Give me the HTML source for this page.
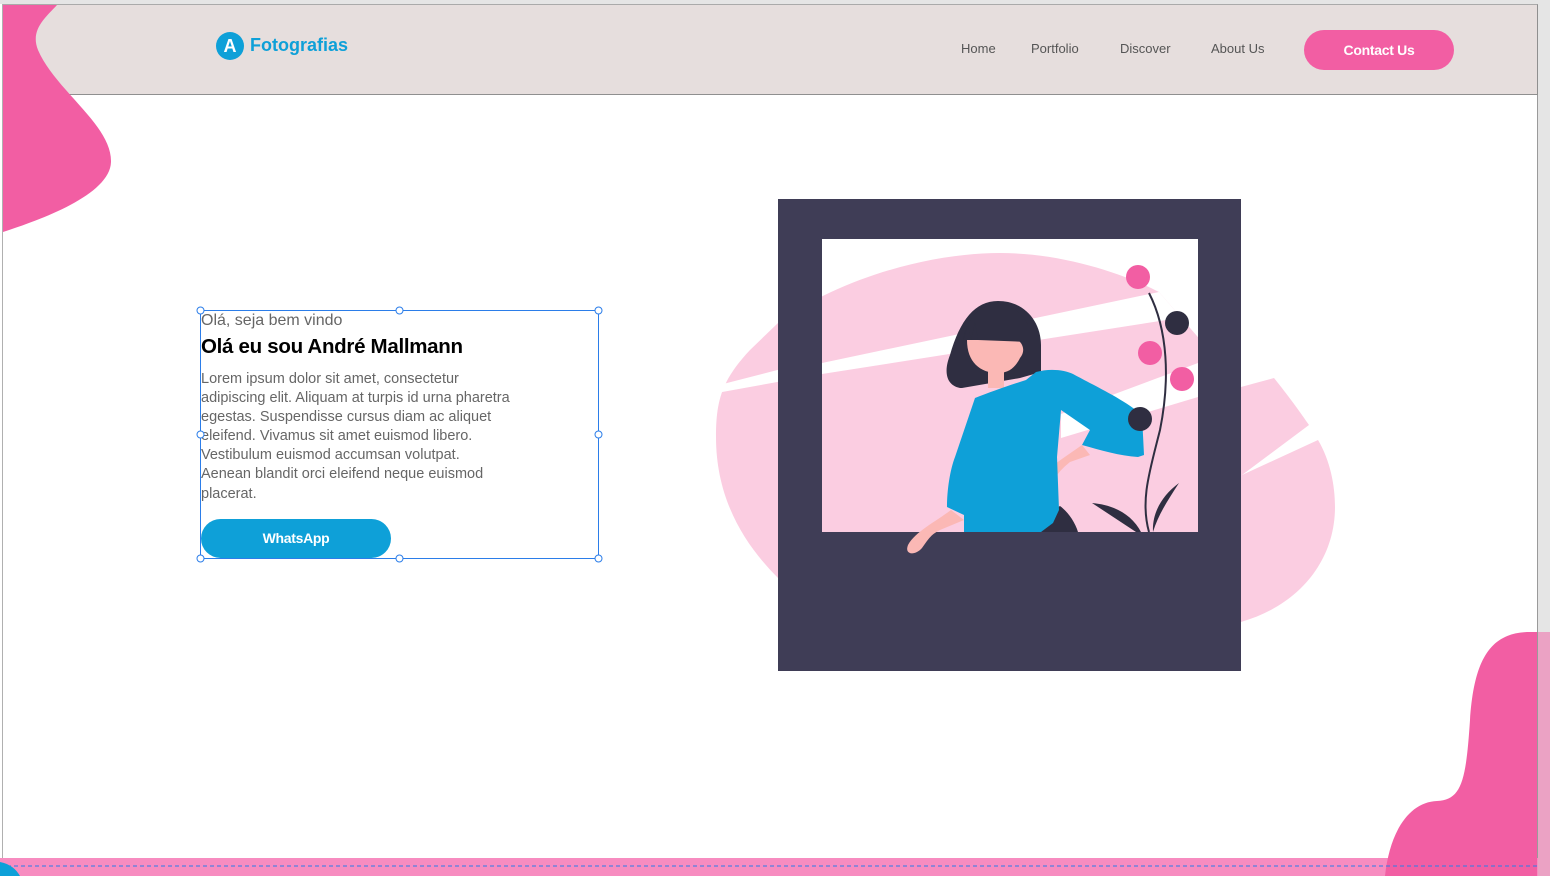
<!DOCTYPE html>
<html><head><meta charset="utf-8"><style>
*{margin:0;padding:0;box-sizing:border-box}
body{width:1550px;height:876px;overflow:hidden;background:#fff;font-family:"Liberation Sans",sans-serif;position:relative}
.abs{position:absolute}
</style></head><body>
<div class="abs" style="left:1537px;top:0;width:13px;height:876px;background:#e5e5e5"></div>
<div class="abs" style="left:0;top:0;width:1550px;height:4px;background:#e5e5e5"></div>
<div class="abs" style="left:3px;top:4px;width:1535px;height:91px;background:#e6dedd;border-top:1px solid #aaa;border-bottom:1px solid #8f8f8f;border-right:1px solid #8f8f8f"></div>
<div class="abs" style="left:1537px;top:95px;width:1px;height:781px;background:#9a9a9a"></div>
<div class="abs" style="left:2px;top:4px;width:1px;height:872px;background:#b0b0b0"></div>

<svg class="abs" style="left:0;top:0" width="1550" height="876" viewBox="0 0 1550 876">
<path d="M3,5 L57,5 C45,18 30,30 38,50 C55,90 112,125 111,162 C110,195 40,220 3,232 Z" fill="#f25ea3"/>
<rect x="0" y="858" width="1550" height="18" fill="#f78cc0"/>
<path d="M1537,876 L1385,876 C1390,830 1410,802 1437,801 C1462,800 1466,780 1470,720 C1474,660 1490,632 1530,632 L1537,632 Z" fill="#f25ea3"/>
<rect x="1538" y="632" width="12" height="244" fill="#eba2c4"/>
<line x1="0" y1="866" x2="1537" y2="866" stroke="#2b7de9" stroke-width="1" stroke-dasharray="4,3"/>
<path d="M0,862 C10,864 16,869 20,876 L0,876 Z" fill="#0ea0d8"/>

<defs><clipPath id="blob"><path id="bp" d="M778,323 C840,278 930,253 1000,253 C1060,253 1120,272 1159,292 L1241,387 L1274,378 C1290,398 1300,412 1309,425 L1242,475 L1318,440 C1330,460 1335,485 1335,507 C1335,560 1300,605 1241,622 L778,578 C745,545 716,500 716,437 C716,400 722,380 750,350 Z"/></clipPath></defs>
<use href="#bp" fill="#fbcde1"/>
<polygon points="700,390 1241,250 1241,298 700,396" fill="#fff"/>
<rect x="778" y="199" width="463" height="472" fill="#3f3d56"/>
<rect x="822" y="239" width="376" height="293" fill="#fff"/>
<g clip-path="url(#blob)">
<rect x="822" y="239" width="376" height="293" fill="#fbcde1"/>
<polygon points="822,363 1159,292 1198,292 1198,315 822,374" fill="#fff"/>
<polygon points="1061,414 1198,363 1198,397 1061,438" fill="#fff"/>
</g>
<path d="M1149,293 C1168,330 1170,380 1160,430 C1150,470 1140,500 1149,532" fill="none" stroke="#2f2e41" stroke-width="2"/>
<path d="M1092,503 C1115,505 1132,515 1141,532 L1136,532 Z" fill="#2f2e41"/>
<path d="M1179,483 C1168,500 1158,515 1153,532 C1152,515 1160,497 1179,483 Z" fill="#2f2e41"/>
<path d="M1041,532 C1043,518 1052,510 1060,506 C1068,512 1075,522 1078,532 Z" fill="#2f2e41"/>
<path d="M951,510 C935,522 915,532 908,545 C904,555 915,556 922,548 C928,540 930,535 940,530 L964,520 Z" fill="#fbb8b5"/>
<path d="M1082,445 C1068,455 1052,465 1042,475 C1035,485 1045,490 1052,482 C1058,474 1060,470 1070,462 L1090,455 Z" fill="#fbb8b5"/>
<path d="M960,388 C945,385 944,370 950,355 C960,320 975,301 998,301 C1025,301 1041,322 1041,345 L1041,372 L1020,378 L962,388 Z" fill="#2f2e41"/>
<path d="M967,340 L1018,340 C1024,345 1025,352 1020,358 C1016,366 1010,373 998,373 C980,373 967,362 967,340 Z" fill="#fbb8b5"/>
<rect x="988" y="368" width="16" height="20" fill="#fbb8b5"/>
<path d="M962,345 L968,325 L971,340 L975,322 L978,340 L1028,342 L1028,325 C1020,308 1005,303 995,304 C978,306 966,320 962,345 Z" fill="#2f2e41"/>
<path d="M975,398 C990,392 1010,385 1026,380 L1036,372 C1050,368 1065,370 1073,374 C1095,386 1125,400 1142,415 L1144,455 L1138,457 C1120,456 1100,450 1082,445 L1090,430 L1061,410 L1057,457 L1059,510 L1053,523 L1041,532 L964,532 L964,515 L947,507 C947,490 950,470 955,457 Z" fill="#0ea0d8"/>
<circle cx="1138" cy="277" r="12" fill="#f25ea3"/>
<circle cx="1177" cy="323" r="12" fill="#2f2e41"/>
<circle cx="1150" cy="353" r="12" fill="#f25ea3"/>
<circle cx="1182" cy="379" r="12" fill="#f25ea3"/>
<circle cx="1140" cy="419" r="12" fill="#2f2e41"/>
</svg>

<div class="abs" style="left:216px;top:32px;width:28px;height:28px;border-radius:50%;background:#0ea0d8;color:#fff;font-weight:bold;font-size:18px;text-align:center;line-height:28px">A</div>
<div class="abs" style="left:250px;top:35px;font-size:18px;font-weight:bold;color:#0ea0d8">Fotografias</div>
<div class="abs" style="left:961px;top:41px;font-size:13px;color:#555">Home</div>
<div class="abs" style="left:1031px;top:41px;font-size:13px;color:#555">Portfolio</div>
<div class="abs" style="left:1120px;top:41px;font-size:13px;color:#555">Discover</div>
<div class="abs" style="left:1211px;top:41px;font-size:13px;color:#555">About Us</div>
<div class="abs" style="left:1304px;top:30px;width:150px;height:40px;border-radius:20px;background:#f25ea3;color:#fff;font-size:14px;font-weight:bold;text-align:center;line-height:40px;letter-spacing:-0.3px">Contact Us</div>

<div class="abs" style="left:200px;top:310px;width:399px;height:249px;border:1px solid #2b7de9"></div>
<div class="abs" style="left:201px;top:312px;font-size:16px;color:#666">Olá, seja bem vindo</div>
<div class="abs" style="left:201px;top:335px;font-size:20.5px;font-weight:bold;color:#000;letter-spacing:-0.3px">Olá eu sou André Mallmann</div>
<div class="abs" style="left:201px;top:370px;width:360px;font-size:14.5px;line-height:19.1px;color:#666;white-space:nowrap">Lorem ipsum dolor sit amet, consectetur<br>adipiscing elit. Aliquam at turpis id urna pharetra<br>egestas. Suspendisse cursus diam ac aliquet<br>eleifend. Vivamus sit amet euismod libero.<br>Vestibulum euismod accumsan volutpat.<br>Aenean blandit orci eleifend neque euismod<br>placerat.</div>
<div class="abs" style="left:201px;top:519px;width:190px;height:39px;border-radius:20px;background:#0ea0d8;color:#fff;font-size:14px;font-weight:bold;text-align:center;line-height:39px;letter-spacing:-0.3px">WhatsApp</div>
<svg class="abs" style="left:0;top:0" width="700" height="600">
<g fill="#fff" stroke="#2b7de9" stroke-width="1">
<circle cx="200.5" cy="310.5" r="3.5"/><circle cx="399.5" cy="310.5" r="3.5"/><circle cx="598.5" cy="310.5" r="3.5"/>
<circle cx="200.5" cy="434.5" r="3.5"/><circle cx="598.5" cy="434.5" r="3.5"/>
<circle cx="200.5" cy="558.5" r="3.5"/><circle cx="399.5" cy="558.5" r="3.5"/><circle cx="598.5" cy="558.5" r="3.5"/>
</g></svg>
</body></html>
